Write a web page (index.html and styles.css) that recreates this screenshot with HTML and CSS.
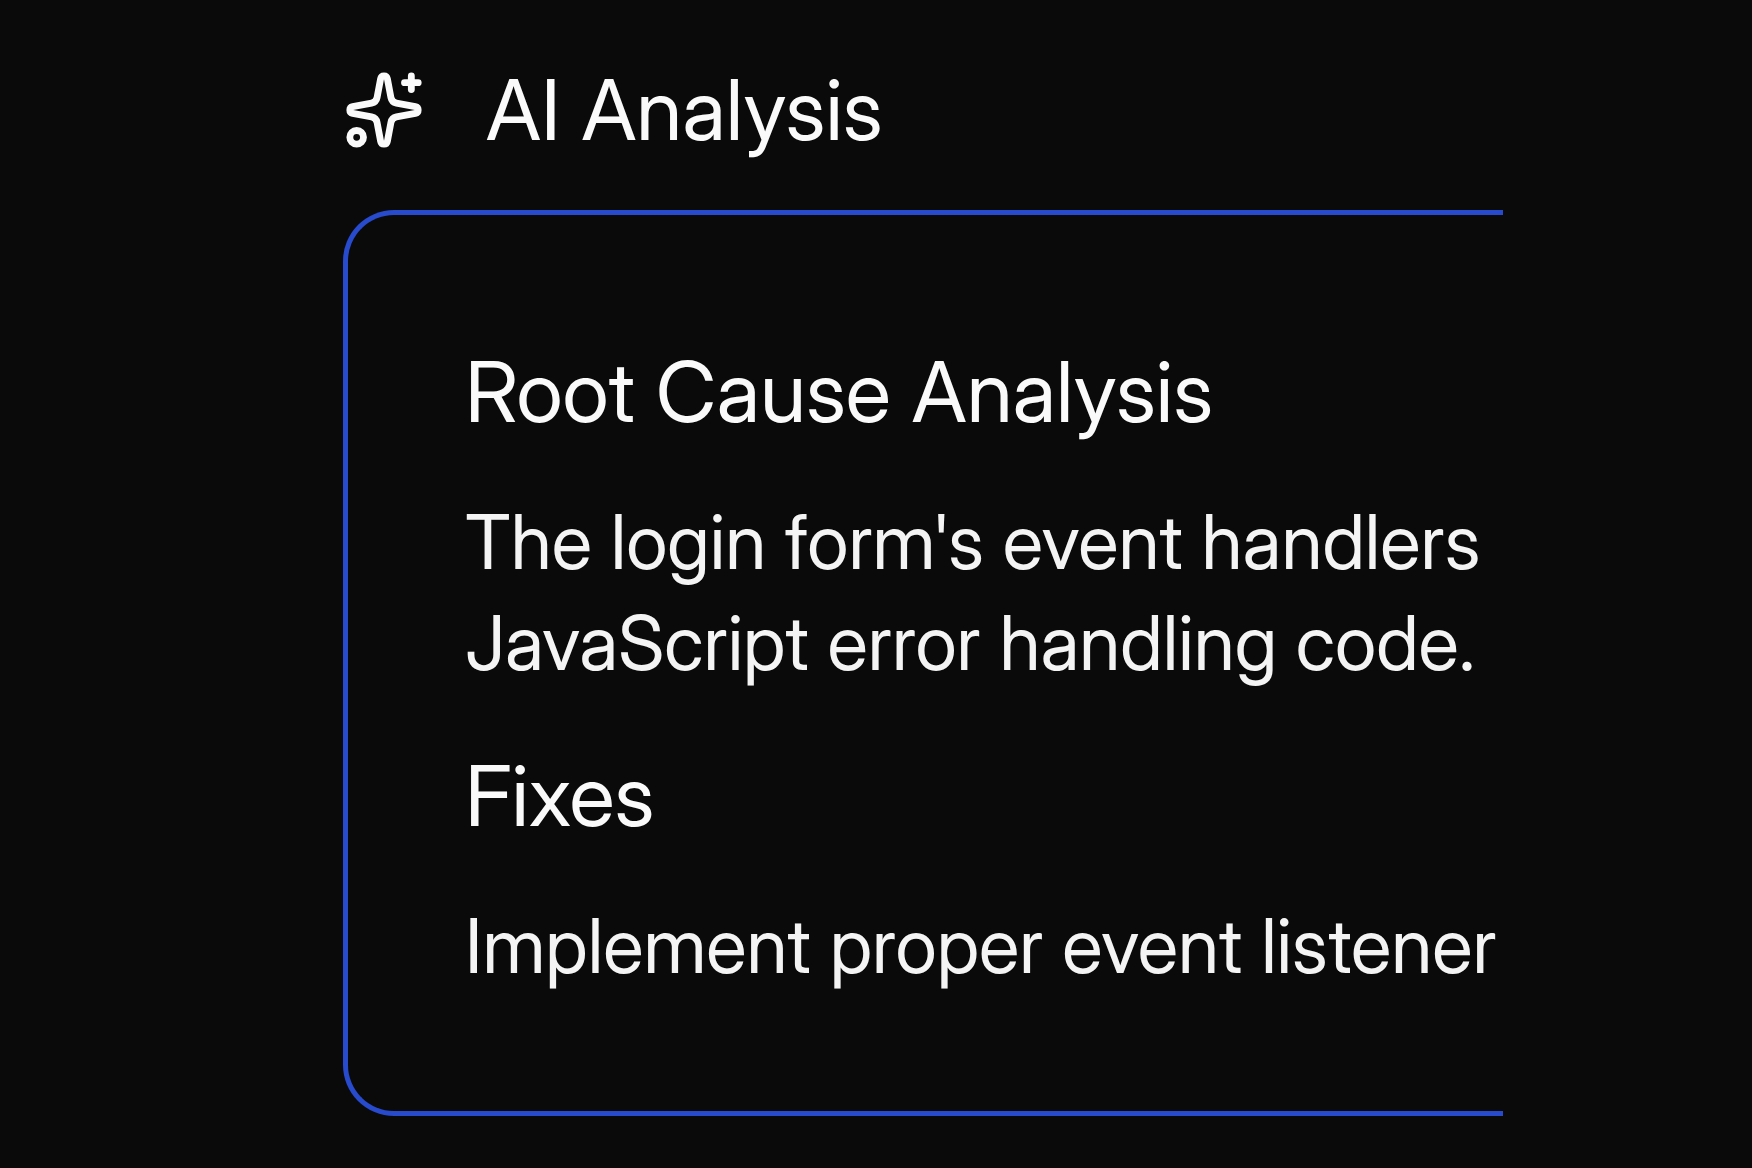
FILE: index.html
```html
<!DOCTYPE html>
<html lang="en">
<head>
  <meta charset="utf-8">
  <meta name="viewport" content="width=device-width, initial-scale=1">
  <title>AI Analysis</title>
  <link rel="stylesheet" href="styles.css">
</head>
<body>
  <main class="page">
    <header class="header">
      <svg class="header-icon" viewBox="0 0 24 24" fill="none" stroke="currentColor" stroke-width="2" stroke-linecap="round" stroke-linejoin="round" aria-hidden="true">
        <path d="M11.017 2.814a1 1 0 0 1 1.966 0l1.051 5.558a2 2 0 0 0 1.594 1.594l5.558 1.051a1 1 0 0 1 0 1.966l-5.558 1.051a2 2 0 0 0-1.594 1.594l-1.051 5.558a1 1 0 0 1-1.966 0l-1.051-5.558a2 2 0 0 0-1.594-1.594l-5.558-1.051a1 1 0 0 1 0-1.966l5.558-1.051a2 2 0 0 0 1.594-1.594z"/>
        <path d="M20 2v4"/>
        <path d="M22 4h-4"/>
        <circle cx="4" cy="20" r="2"/>
      </svg>
      <h1 class="heading">AI Analysis</h1>
    </header>
    <div class="card">
      <section class="section">
        <h2 class="heading">Root Cause Analysis</h2>
        <p class="text">The login form's event handlers<br>JavaScript error handling code.</p>
      </section>
      <section class="section">
        <h2 class="heading">Fixes</h2>
        <p class="text">Implement proper event listener</p>
      </section>
    </div>
  </main>
</body>
</html>
```
FILE: styles.css
```css
* {
  box-sizing: border-box;
  margin: 0;
}

body {
  background: #0a0a0a;
  color: #fafafa;
  font-family: "Inter Display", Inter, "Liberation Sans", sans-serif;
}

.page {
  padding: 49px 249px 49px 343px;
}

.header {
  display: flex;
  align-items: center;
  gap: 61px;
  margin-bottom: 39px;
}

.header-icon {
  flex: none;
  width: 82px;
  height: 82px;
}

.heading {
  font-size: 84px;
  font-weight: 400;
  line-height: 122px;
  white-space: nowrap;
}

.card {
  display: flex;
  flex-direction: column;
  gap: 42px;
  padding: 116px 0 115px 117px;
  border: 5px solid #284acc;
  border-right: 0;
  border-radius: 51px 0 0 51px;
  overflow: hidden;
}

.section {
  display: flex;
  flex-direction: column;
  gap: 38px;
}

.text {
  color: #f4f4f5;
  font-size: 75px;
  line-height: 101px;
  white-space: nowrap;
}
```
